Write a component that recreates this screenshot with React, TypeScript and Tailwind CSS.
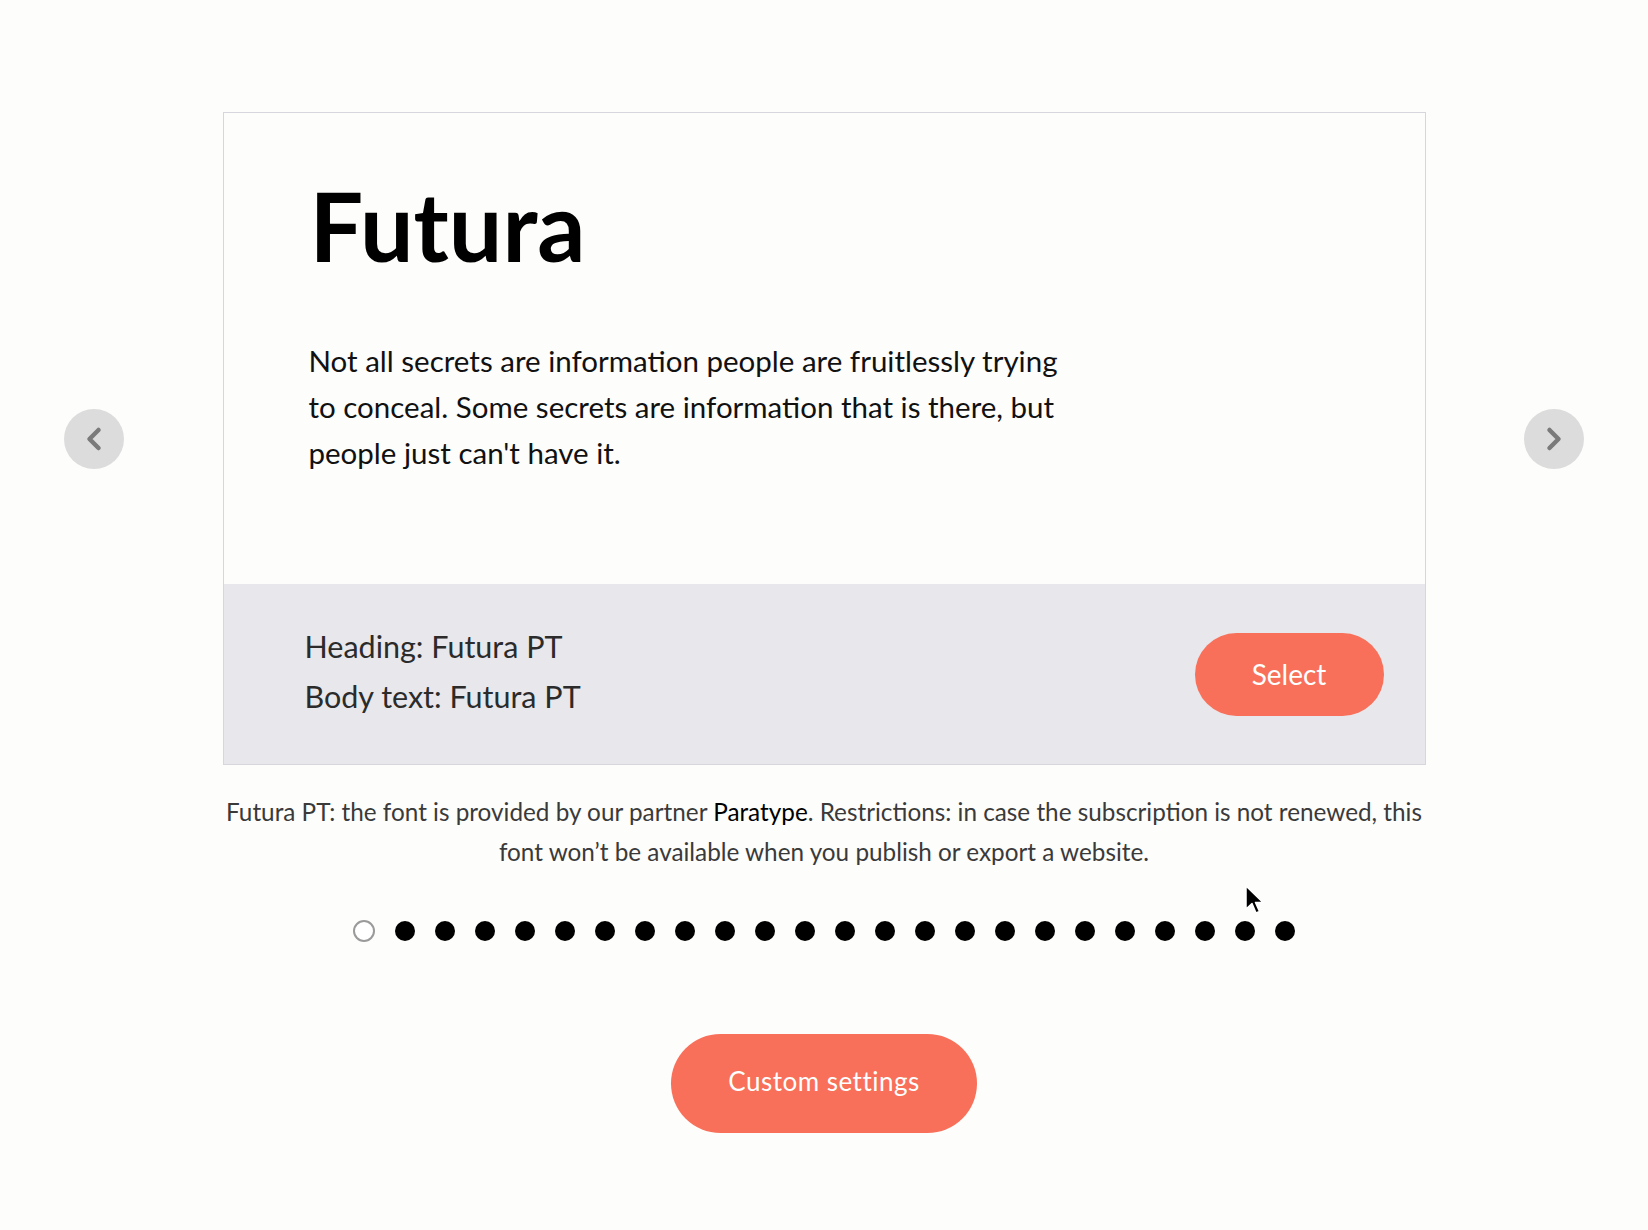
import { ChevronLeft, ChevronRight } from 'lucide-react'

const dots = Array.from({ length: 23 }, (_, i) => i)

function NavButton({ dir }: { dir: 'left' | 'right' }) {
  return (
    <button className="flex h-[60px] w-[60px] shrink-0 items-center justify-center rounded-full bg-[#dcdcdc] text-[#7a7a7a]">
      {dir === 'left' ? (
        <ChevronLeft className="h-9 w-9" strokeWidth={3} />
      ) : (
        <ChevronRight className="h-9 w-9" strokeWidth={3} />
      )}
    </button>
  )
}

export default function App() {
  return (
    <div className="relative min-h-[1230px] w-full bg-[#fdfdfb] pt-[112px] font-['Lato','Liberation_Sans',sans-serif] text-[#111]">
      <div className="mx-auto flex w-[1520px] items-center justify-between">
        <NavButton dir="left" />

        <div className="w-[1203px] border border-[#d6d6dc]">
          <div className="pl-[85px] pt-[65px] pb-[108px]">
            <h1 className="ml-[1px] text-[95px] font-bold leading-none text-black">
              Futura
            </h1>
            <p className="mt-[65px] text-[29.5px] leading-[46px] text-[#111]">
              Not all secrets are information people are fruitlessly trying
              <br />
              to conceal. Some secrets are information that is there, but
              <br />
              people just can't have it.
            </p>
          </div>

          <div className="flex h-[180px] items-center justify-between bg-[#e7e7ec] pl-[81px] pr-[41px]">
            <div className="mb-[6px] text-[30.5px] leading-[50px] text-[#2b2b2b]">
              <div>Heading: Futura PT</div>
              <div>Body text: Futura PT</div>
            </div>
            <button className="flex h-[83px] w-[189px] items-center justify-center rounded-full bg-[#f8705a] text-[28px] text-white">
              Select
            </button>
          </div>
        </div>

        <NavButton dir="right" />
      </div>

      <p className="mx-auto mt-[27px] w-[1320px] text-center text-[24.3px] leading-[40px] text-[#3a3a3a]">
        Futura PT: the font is provided by our partner <span className="text-black">Paratype</span>. Restrictions: in case the subscription is not renewed, this
        <br />
        font won’t be available when you publish or export a website.
      </p>

      <div className="mt-[48px] flex items-center justify-center gap-5">
        <span className="h-[22px] w-[22px] rounded-full border-2 border-[#9a9a9a] bg-white" />
        {dots.map((i) => (
          <span key={i} className="h-5 w-5 rounded-full bg-black" />
        ))}
      </div>

      <div className="mt-[92px] flex justify-center">
        <button className="flex h-[99px] w-[306px] items-center justify-center rounded-full bg-[#f8705a] pb-[4px] text-[26px] tracking-[0.5px] text-white">
          Custom settings
        </button>
      </div>

      {/* mouse pointer captured in the shot */}
      <svg
        className="absolute left-[1245px] top-[885px]"
        width="22"
        height="32"
        viewBox="0 0 22 32"
      >
        <path
          d="M1 1 L1 24 L7 18.5 L11 28 L14.5 26.5 L10.5 17.5 L18 17.5 Z"
          fill="black"
          stroke="white"
          strokeWidth="1.5"
          strokeLinejoin="round"
        />
      </svg>
    </div>
  )
}
